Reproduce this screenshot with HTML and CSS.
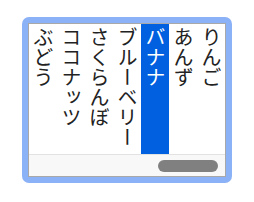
FILE: index.html
```html
<!DOCTYPE html>
<html lang="ja">
<head>
  <meta charset="UTF-8" />
  <title>Fruit list</title>
  <link rel="stylesheet" href="styles.css">
</head>
<body>
  <div class="focus-ring">
    <div class="listbox">
      <ul class="options">
        <li>りんご</li>
        <li>あんず</li>
        <li class="selected">バナナ</li>
        <li>ブルーベリー</li>
        <li>さくらんぼ</li>
        <li>ココナッツ</li>
        <li>ぶどう</li>
      </ul>
      <!-- horizontal scrollbar -->
      <div class="scrollbar">
        <div class="thumb"></div>
      </div>
    </div>
  </div>
</body>
</html>
```

FILE: styles.css
```css
body {
  margin: 0;
  padding: 17px 0 0 22px;
  background: #fff;
  font-family: "Noto Sans CJK JP", "Noto Sans", sans-serif;
}

.focus-ring {
  width: 210px;
  height: 166px;
  box-sizing: border-box;
  padding: 6px;
  background: #8bb1f6;
  border-radius: 7px;
}

.listbox {
  height: 100%;
  box-sizing: border-box;
  border: 1px solid #a8a8a8;
  background: #fff;
  display: flex;
  flex-direction: column;
}

.options {
  list-style: none;
  margin: 0;
  padding: 0;
  height: 130px;
  writing-mode: vertical-rl;
  font-size: 20px;
  color: #222;
}

.options li {
  width: 28px;
  line-height: 28px;
  padding-top: 3px;
  box-sizing: border-box;
}

.options .selected {
  background: #0060df;
  color: #fff;
}

.scrollbar {
  flex: 1;
  border-top: 1px solid #e2e2e2;
  background: #f8f8f8;
  display: flex;
  justify-content: flex-end;
  align-items: center;
  padding-right: 7px;
}

.thumb {
  width: 60px;
  height: 12px;
  border-radius: 6px;
  background: #808080;
}
```
